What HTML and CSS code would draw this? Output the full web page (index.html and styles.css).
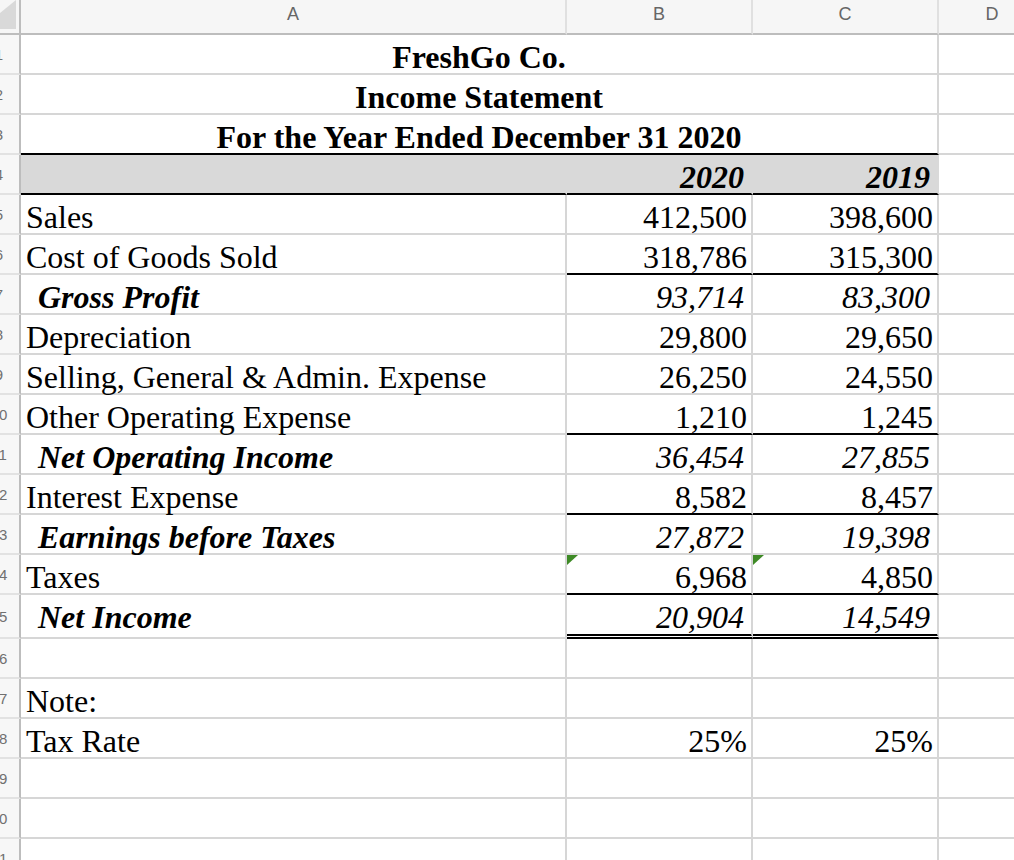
FILE: index.html
```html
<!DOCTYPE html>
<html lang="en">
<head>
<meta charset="utf-8">
<title>FreshGo Co. Income Statement</title>
<link rel="stylesheet" href="styles.css">
</head>
<body>
<div class="sheet">
  <div class="row colhead">
    <div class="corner"><svg width="19" height="33" viewBox="0 0 19 33"><polygon points="0,13 16,0 16,29 0,29" fill="#d9d9d9"/></svg></div>
    <div class="ch">A</div>
    <div class="ch">B</div>
    <div class="ch">C</div>
    <div class="ch">D</div>
  </div>

  <div class="row">
    <div class="rh"><span>1</span></div>
    <div class="c merged title">FreshGo Co.</div>
    <div class="c"></div>
  </div>
  <div class="row">
    <div class="rh"><span>2</span></div>
    <div class="c merged title">Income Statement</div>
    <div class="c"></div>
  </div>
  <div class="row">
    <div class="rh"><span>3</span></div>
    <div class="c merged title rule">For the Year Ended December 31 2020</div>
    <div class="c"></div>
  </div>
  <div class="row">
    <div class="rh"><span>4</span></div>
    <div class="c shade rule"></div>
    <div class="c shade rule num bi">2020</div>
    <div class="c shade rule num bi">2019</div>
    <div class="c"></div>
  </div>
  <div class="row">
    <div class="rh"><span>5</span></div>
    <div class="c label">Sales</div>
    <div class="c num">412,500</div>
    <div class="c num">398,600</div>
    <div class="c"></div>
  </div>
  <div class="row">
    <div class="rh"><span>6</span></div>
    <div class="c label">Cost of Goods Sold</div>
    <div class="c num rule">318,786</div>
    <div class="c num rule">315,300</div>
    <div class="c"></div>
  </div>
  <div class="row">
    <div class="rh"><span>7</span></div>
    <div class="c label total">Gross Profit</div>
    <div class="c num it">93,714</div>
    <div class="c num it">83,300</div>
    <div class="c"></div>
  </div>
  <div class="row">
    <div class="rh"><span>8</span></div>
    <div class="c label">Depreciation</div>
    <div class="c num">29,800</div>
    <div class="c num">29,650</div>
    <div class="c"></div>
  </div>
  <div class="row">
    <div class="rh"><span>9</span></div>
    <div class="c label">Selling, General &amp; Admin. Expense</div>
    <div class="c num">26,250</div>
    <div class="c num">24,550</div>
    <div class="c"></div>
  </div>
  <div class="row">
    <div class="rh"><span>10</span></div>
    <div class="c label">Other Operating Expense</div>
    <div class="c num rule">1,210</div>
    <div class="c num rule">1,245</div>
    <div class="c"></div>
  </div>
  <div class="row">
    <div class="rh"><span>11</span></div>
    <div class="c label total">Net Operating Income</div>
    <div class="c num it">36,454</div>
    <div class="c num it">27,855</div>
    <div class="c"></div>
  </div>
  <div class="row">
    <div class="rh"><span>12</span></div>
    <div class="c label">Interest Expense</div>
    <div class="c num rule">8,582</div>
    <div class="c num rule">8,457</div>
    <div class="c"></div>
  </div>
  <div class="row">
    <div class="rh"><span>13</span></div>
    <div class="c label total">Earnings before Taxes</div>
    <div class="c num it">27,872</div>
    <div class="c num it">19,398</div>
    <div class="c"></div>
  </div>
  <div class="row">
    <div class="rh"><span>14</span></div>
    <div class="c label">Taxes</div>
    <div class="c num rule flag">6,968</div>
    <div class="c num rule flag">4,850</div>
    <div class="c"></div>
  </div>
  <div class="row tall">
    <div class="rh"><span>15</span></div>
    <div class="c label total">Net Income</div>
    <div class="c num it dbl">20,904</div>
    <div class="c num it dbl">14,549</div>
    <div class="c"></div>
  </div>
  <div class="row">
    <div class="rh"><span>16</span></div>
    <div class="c"></div>
    <div class="c"></div>
    <div class="c"></div>
    <div class="c"></div>
  </div>
  <div class="row">
    <div class="rh"><span>17</span></div>
    <div class="c label">Note:</div>
    <div class="c"></div>
    <div class="c"></div>
    <div class="c"></div>
  </div>
  <div class="row">
    <div class="rh"><span>18</span></div>
    <div class="c label">Tax Rate</div>
    <div class="c num">25%</div>
    <div class="c num">25%</div>
    <div class="c"></div>
  </div>
  <div class="row">
    <div class="rh"><span>19</span></div>
    <div class="c"></div>
    <div class="c"></div>
    <div class="c"></div>
    <div class="c"></div>
  </div>
  <div class="row">
    <div class="rh"><span>20</span></div>
    <div class="c"></div>
    <div class="c"></div>
    <div class="c"></div>
    <div class="c"></div>
  </div>
  <div class="row">
    <div class="rh"><span>21</span></div>
    <div class="c"></div>
    <div class="c"></div>
    <div class="c"></div>
    <div class="c"></div>
  </div>
</div>
</body>
</html>
```

FILE: styles.css
```css
html, body {
  margin: 0;
  padding: 0;
  background: #ffffff;
  overflow: hidden;
}

.sheet {
  width: 1014px;
  height: 860px;
  overflow: hidden;
  font-family: "Liberation Serif", "Times New Roman", serif;
  font-size: 32px;
  color: #000;
}

.row {
  display: grid;
  grid-template-columns: 21px 546px 186px 186px 108px;
  width: 1047px;
  height: 40px;
}

.row.tall {
  height: 44px;
}

.row > div {
  box-sizing: border-box;
}

/* column header */
.colhead {
  height: 35px;
  background: #f6f6f6;
}

.corner {
  border-right: 2px solid #bdbdbd;
  border-bottom: 2px solid #bdbdbd;
  overflow: hidden;
}

.corner svg {
  display: block;
}

.ch {
  border-right: 2px solid #e0e0e0;
  border-bottom: 2px solid #bdbdbd;
  font-family: "Liberation Sans", Arial, sans-serif;
  font-size: 18px;
  line-height: 20px;
  color: #666666;
  text-align: center;
  padding-top: 4px;
}

/* row header */
.rh {
  background: #f7f7f7;
  border-right: 2px solid #bdbdbd;
  border-bottom: 2px solid #e2e2e2;
  overflow: hidden;
  display: flex;
  align-items: center;
  font-family: "Liberation Sans", Arial, sans-serif;
  font-size: 15px;
  color: #707070;
}

.rh span {
  flex: 0 0 42px;
  margin-left: -22px;
  text-align: center;
}

/* cells */
.c {
  border-right: 2px solid #d6d6d6;
  border-bottom: 2px solid #d6d6d6;
  display: flex;
  align-items: flex-end;
  line-height: 32px;
  white-space: nowrap;
  position: relative;
}

.tall .c {
  padding-bottom: 4px;
}

.merged {
  grid-column: 2 / 5;
}

.title {
  justify-content: center;
  font-weight: bold;
}

.label {
  padding-left: 5px;
}

.label.total {
  padding-left: 17px;
  font-weight: bold;
  font-style: italic;
}

.num {
  justify-content: flex-end;
  padding-right: 4px;
}

.num.it {
  font-style: italic;
  padding-right: 7px;
}

.num.bi {
  font-style: italic;
  font-weight: bold;
  padding-right: 7px;
}

.shade {
  background: #d9d9d9;
  border-right-color: #d9d9d9;
}

.rule {
  border-bottom-color: #000000;
}

.tall .dbl {
  border-bottom: 5px double #000000;
  padding-bottom: 1px;
}

.flag::before {
  content: "";
  position: absolute;
  left: 0;
  top: 0;
  width: 0;
  height: 0;
  border-top: 10px solid #3e8a26;
  border-right: 11px solid transparent;
}
```
